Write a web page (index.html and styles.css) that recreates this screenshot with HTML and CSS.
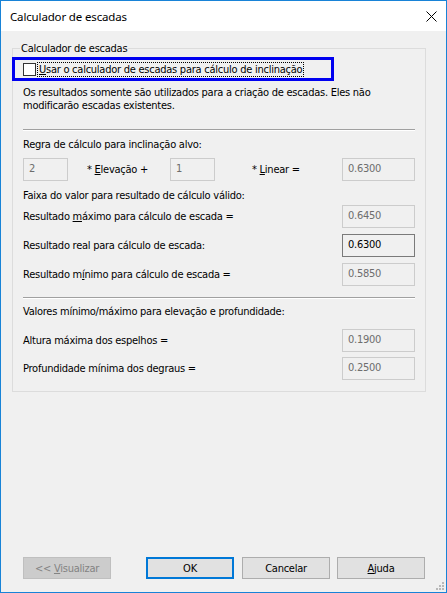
FILE: index.html
```html
<!DOCTYPE html>
<html lang="pt">
<head>
<meta charset="utf-8">
<title>Calculador de escadas</title>
<link rel="stylesheet" href="styles.css">
</head>
<body>
<div class="window">
  <div class="titlebar">
    <span class="title">Calculador de escadas</span>
    <svg class="close" width="11" height="11" viewBox="0 0 11 11"><path d="M0.5 0.5 L10.5 10.5 M10.5 0.5 L0.5 10.5" stroke="#000" stroke-width="1" fill="none"/></svg>
  </div>
  <div class="client">
    <div class="group">
      <div class="legend">Calculador de escadas</div>
      <div class="check-row">
        <span class="checkbox"></span>
        <span class="check-label"><u>U</u>sar o calculador de escadas para cálculo de inclinação</span>
      </div>
      <p class="desc">Os resultados somente são utilizados para a criação de escadas. Eles não<br>modificarão escadas existentes.</p>
      <div class="sep sep-1"></div>
      <div class="text t-regra">Regra de cálculo para inclinação alvo:</div>
      <div class="formula">
        <span class="box box-small disabled">2</span>
        <span class="op op-elev">* <u>E</u>levação +</span>
        <span class="box box-small disabled">1</span>
        <span class="op op-lin">* <u>L</u>inear =</span>
        <span class="box disabled">0.6300</span>
      </div>
      <div class="text t-faixa">Faixa do valor para resultado de cálculo válido:</div>
      <div class="row r-max">
        <span class="label">Resultado <u>m</u>áximo para cálculo de escada =</span>
        <span class="box disabled">0.6450</span>
      </div>
      <div class="row r-real">
        <span class="label">Resultado real para cálculo de escada:</span>
        <span class="box active">0.6300</span>
      </div>
      <div class="row r-min">
        <span class="label">Resultado m<u>í</u>nimo para cálculo de escada =</span>
        <span class="box disabled">0.5850</span>
      </div>
      <div class="sep sep-2"></div>
      <div class="text t-valores">Valores mínimo/máximo para elevação e profundidade:</div>
      <div class="row r-alt">
        <span class="label">Altura máxima dos espelhos =</span>
        <span class="box disabled">0.1900</span>
      </div>
      <div class="row r-prof">
        <span class="label">Profundidade mínima dos degraus =</span>
        <span class="box disabled">0.2500</span>
      </div>
    </div>
    <div class="footer">
      <span class="btn btn-disabled"><span>&lt;&lt; <u>V</u>isualizar</span></span>
      <span class="btn btn-default"><span>OK</span></span>
      <span class="btn btn-cancel"><span>Cancelar</span></span>
      <span class="btn btn-help"><span><u>A</u>juda</span></span>
    </div>
  </div>
  <svg class="grip" width="8" height="8" viewBox="0 0 8 8">
    <rect x="6" y="0" width="2" height="2" fill="#b8b8b8"/>
    <rect x="3" y="3" width="2" height="2" fill="#b8b8b8"/>
    <rect x="6" y="3" width="2" height="2" fill="#b8b8b8"/>
    <rect x="0" y="6" width="2" height="2" fill="#b8b8b8"/>
    <rect x="3" y="6" width="2" height="2" fill="#b8b8b8"/>
    <rect x="6" y="6" width="2" height="2" fill="#b8b8b8"/>
  </svg>
</div>
</body>
</html>
```
FILE: styles.css
```css
html, body {
  margin: 0;
  padding: 0;
}

body {
  width: 447px;
  height: 593px;
  overflow: hidden;
  font-family: Tahoma, "DejaVu Sans Condensed", "Liberation Sans", sans-serif;
  font-size: 11px;
  line-height: 13px;
  letter-spacing: -0.25px;
  color: #000;
}

.window {
  position: relative;
  width: 447px;
  height: 593px;
  box-sizing: border-box;
  border: 1px solid #1883d7;
  background: #f0f0f0;
  display: flex;
  flex-direction: column;
}

.titlebar {
  height: 30px;
  flex: none;
  background: #fff;
  display: flex;
  align-items: center;
  justify-content: space-between;
  padding: 0 9px 0 9px;
}

.title {
  font-family: "Segoe UI", "Noto Sans", sans-serif;
  font-size: 11.5px;
  letter-spacing: -0.15px;
}

.close {
  display: block;
  margin-top: 1px;
}

.client {
  flex: 1;
  display: flex;
  flex-direction: column;
}

.group {
  width: 414px;
  box-sizing: border-box;
  margin: 17px 0 0 11px;
  border: 1px solid #dcdcdc;
  padding: 0 10px 11px 10px;
}

.legend {
  display: table;
  margin: -7px 0 0 -3px;
  padding: 0 1px;
  background: #f0f0f0;
}

.check-row {
  width: 322px;
  height: 24px;
  box-sizing: border-box;
  margin: 2px 0 0 -11px;
  border: 3px solid #0000f0;
  display: flex;
  align-items: flex-start;
  padding: 3px 0 0 8px;
}

.checkbox {
  width: 13px;
  height: 13px;
  box-sizing: border-box;
  border: 1px solid #333;
  background: #fff;
  flex: none;
}

.check-label {
  margin: -1px 0 0 1px;
  border: 1px dotted #000;
  padding: 0 1px;
}

.desc {
  margin: 5px 0 0 0;
}

.sep {
  height: 0;
  border-top: 1px solid #a0a0a0;
  border-bottom: 1px solid #fff;
}

.sep-1 { margin-top: 17px; }
.sep-2 { margin-top: 11px; }

.t-regra { margin-top: 7px; }
.t-faixa { margin-top: 8px; }
.t-valores { margin-top: 6px; }

.formula {
  display: flex;
  align-items: center;
  margin-top: 7px;
}

.box {
  width: 73px;
  height: 23px;
  box-sizing: border-box;
  padding: 3px 4px 0 5px;
  border: 1px solid #cccccc;
  background: #f0f0f0;
  flex: none;
}

.box-small {
  width: 45px;
}

.disabled {
  color: #6d6d6d;
}

.active {
  border-color: #7a7a7a;
  color: #000;
}

.op {
  flex: none;
}

.op-elev {
  width: 83px;
  margin-left: 19px;
}

.op-lin {
  width: 90px;
  margin-left: 37px;
}

.row {
  display: flex;
  align-items: center;
  justify-content: space-between;
}

.r-max { margin-top: 3px; }
.r-real { margin-top: 6px; }
.r-min { margin-top: 6px; }
.r-alt { margin-top: 11px; }
.r-prof { margin-top: 5px; }

.footer {
  margin-top: auto;
  display: flex;
  padding: 0 0 13px 22px;
}

.btn {
  width: 88px;
  height: 22px;
  box-sizing: border-box;
  border: 1px solid #adadad;
  background: #e1e1e1;
  display: flex;
  align-items: center;
  justify-content: center;
  flex: none;
}

.btn-disabled {
  background: #cccccc;
  border-color: #bfbfbf;
  color: #838383;
}

.btn-default {
  margin-left: 35px;
  border: 2px solid #0078d7;
}

.btn-cancel { margin-left: 8px; }
.btn-help { margin-left: 7px; }

.grip {
  position: absolute;
  right: 2px;
  bottom: 2px;
  display: block;
}
```
